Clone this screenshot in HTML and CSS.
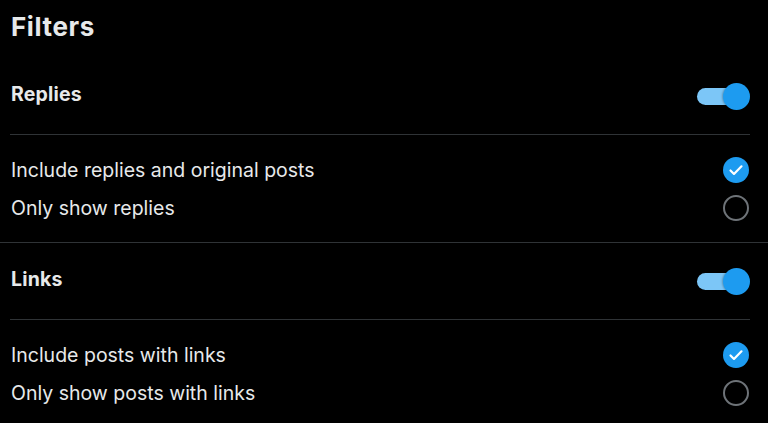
FILE: index.html
```html
<!DOCTYPE html>
<html lang="en">
<head>
<meta charset="utf-8">
<title>Filters</title>
<link rel="stylesheet" href="styles.css">
</head>
<body>
<main class="panel">
  <h1 class="title">Filters</h1>

  <section class="group">
    <div class="group-head">
      <span class="group-label">Replies</span>
      <span class="toggle on"><span class="track"></span><span class="thumb"></span></span>
    </div>
    <div class="divider inset"></div>
    <div class="options">
      <div class="option"><span>Include replies and original posts</span>
        <span class="radio checked"><svg viewBox="0 0 24 24" width="22" height="22"><path d="M6 12.5l3.8 3.8L18 8" fill="none" stroke="#fff" stroke-width="2.4" stroke-linecap="round" stroke-linejoin="round"/></svg></span>
      </div>
      <div class="option"><span>Only show replies</span><span class="radio"></span></div>
    </div>
  </section>

  <div class="divider full"></div>

  <section class="group">
    <div class="group-head">
      <span class="group-label">Links</span>
      <span class="toggle on"><span class="track"></span><span class="thumb"></span></span>
    </div>
    <div class="divider inset"></div>
    <div class="options">
      <div class="option"><span>Include posts with links</span>
        <span class="radio checked"><svg viewBox="0 0 24 24" width="22" height="22"><path d="M6 12.5l3.8 3.8L18 8" fill="none" stroke="#fff" stroke-width="2.4" stroke-linecap="round" stroke-linejoin="round"/></svg></span>
      </div>
      <div class="option"><span>Only show posts with links</span><span class="radio"></span></div>
    </div>
  </section>
</main>
</body>
</html>
```

FILE: styles.css
```css
html, body {
  margin: 0;
  padding: 0;
  background: #000;
}
body {
  width: 768px;
  height: 423px;
  overflow: hidden;
  font-family: Inter, "Open Sans", Arial, sans-serif;
  color: #e7e9ea;
}
.panel {
  display: flex;
  flex-direction: column;
}
.title {
  margin: 0;
  height: 58px;
  padding: 9px 11px 0;
  box-sizing: border-box;
  font-size: 26px;
  font-weight: 700;
  line-height: 36px;
  letter-spacing: 0.6px;
}
.group-head {
  height: 76px;
  padding: 0 18px 0 11px;
  display: flex;
  align-items: center;
  justify-content: space-between;
}
.group-label {
  font-size: 19.5px;
  font-weight: 700;
  line-height: 24px;
  margin-top: -4px;
  letter-spacing: 0.2px;
}
.toggle {
  position: relative;
  width: 53px;
  height: 27px;
  display: block;
}
.toggle .track {
  position: absolute;
  left: 0;
  top: 5px;
  width: 48px;
  height: 17px;
  border-radius: 9px;
  background: #7cc6f7;
}
.toggle .thumb {
  position: absolute;
  right: 0;
  top: 0;
  width: 27px;
  height: 27px;
  border-radius: 50%;
  background: #1d9bf0;
  box-shadow: -1px 0 2px rgba(0,0,0,0.25);
}
.divider {
  height: 1px;
  background: #2f3336;
}
.divider.inset {
  margin: 0 18px 0 10px;
}
.options {
  padding: 16px 18px 15px 11px;
  display: flex;
  flex-direction: column;
}
.option {
  height: 38px;
  display: flex;
  align-items: center;
  justify-content: space-between;
  font-size: 19.5px;
  line-height: 24px;
}
.option > span:first-child {
  margin-top: -1px;
}
.radio {
  width: 26px;
  height: 26px;
  box-sizing: border-box;
  border-radius: 50%;
  border: 2px solid #6e7378;
  display: flex;
  align-items: center;
  justify-content: center;
  margin-right: 1px;
}
.radio.checked {
  border: none;
  background: #1d9bf0;
}
```
